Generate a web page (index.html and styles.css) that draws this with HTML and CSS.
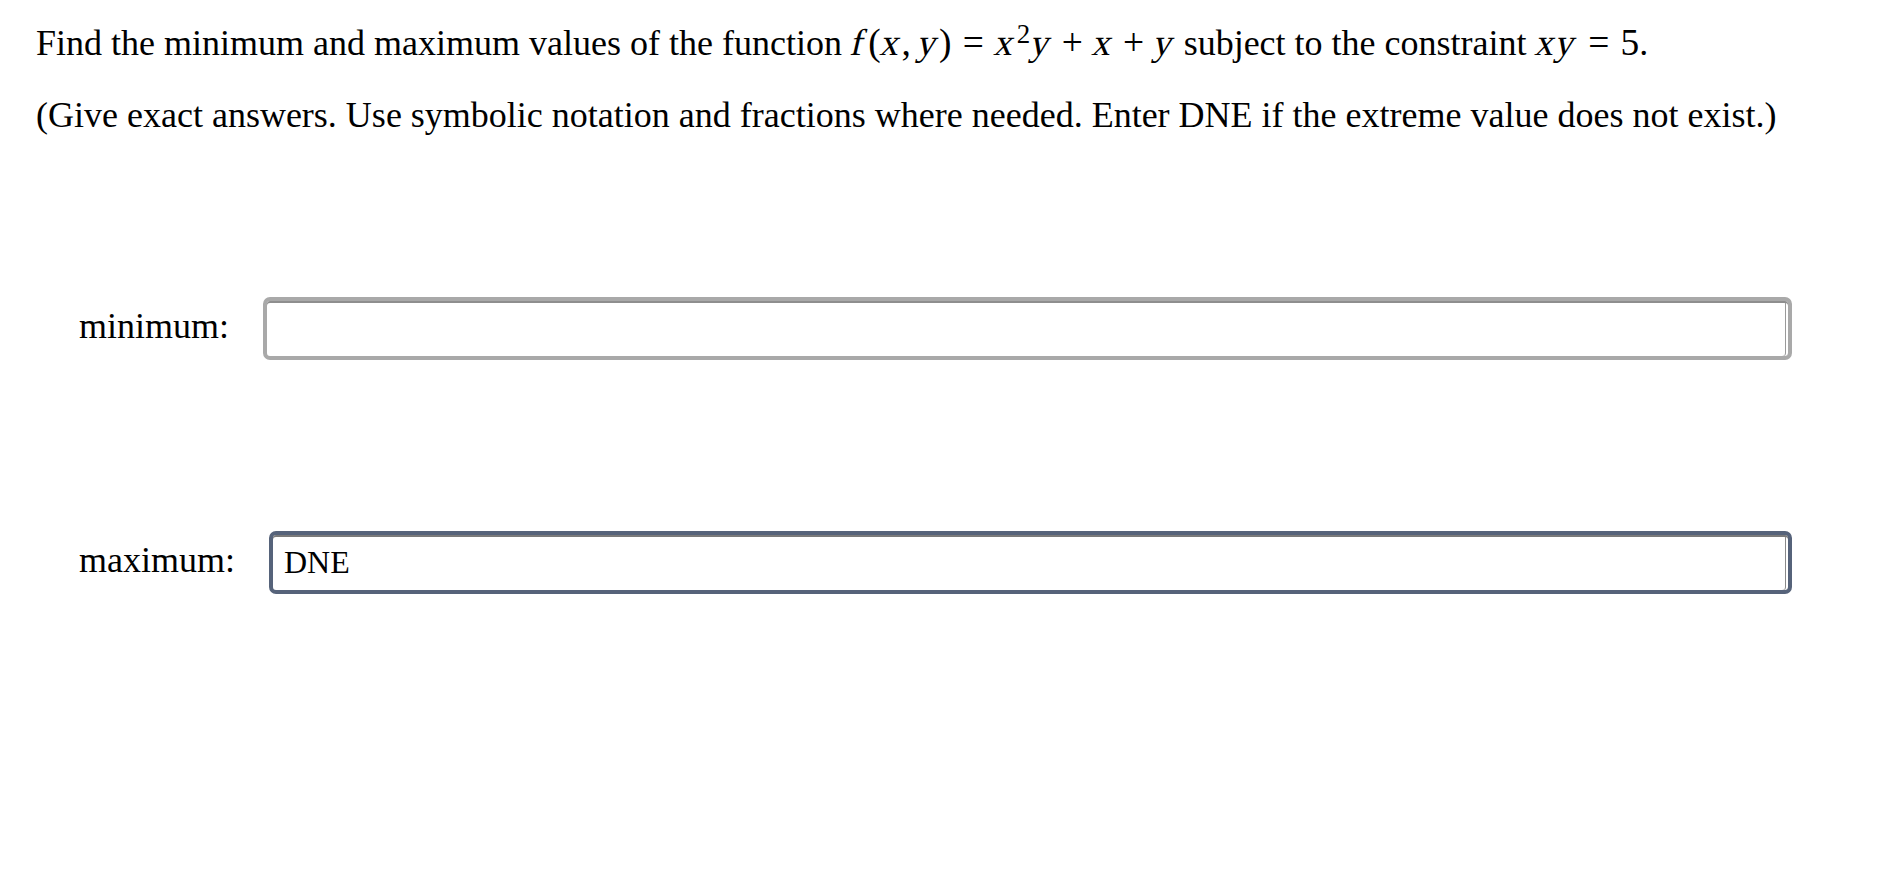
FILE: index.html
```html
<!DOCTYPE html>
<html>
<head>
<meta charset="utf-8">
<link rel="stylesheet" href="styles.css">
</head>
<body>
<div class="page">
  <div class="question">
    <p class="line">Find the minimum and maximum values of the function <span class="math"><span class="v vf">f</span><span class="p">(</span><span class="v">x</span><span class="comma">,</span><span class="v">y</span><span class="p">)</span><span class="rel">=</span><span class="v">x</span><sup>2</sup><span class="v">y</span><span class="bin">+</span><span class="v">x</span><span class="bin">+</span><span class="v">y</span></span> subject to the constraint <span class="math"><span class="v">x</span><span class="v">y</span><span class="rel">=</span>5</span>.</p>
    <p class="line">(Give exact answers. Use symbolic notation and fractions where needed. Enter DNE if the extreme value does not exist.)</p>
  </div>
  <div class="answers">
    <div class="row">
      <label class="lbl">minimum:</label>
      <input class="ans" type="text">
    </div>
    <div class="row">
      <label class="lbl">maximum:</label>
      <input class="ans dark" type="text" value="DNE">
    </div>
  </div>
</div>
</body>
</html>
```

FILE: styles.css
```css
html, body {
  margin: 0;
  padding: 0;
  background: #ffffff;
}

.page {
  font-family: "Liberation Serif", "Times New Roman", serif;
  color: #000;
  font-size: 36px;
  padding: 22px 89px 0 36px;
}

.question {
  display: flex;
  flex-direction: column;
  gap: 31px;
}

.line {
  margin: 0;
  line-height: 41px;
  white-space: nowrap;
}

.math {
  font-size: 1.04em;
}

.v {
  display: inline-block;
  font-style: normal;
  transform: skewX(-13deg);
  margin: 0 1px;
}

.vf {
  margin-right: 4px;
}

.p {
  display: inline-block;
}

.comma {
  margin-right: 0.2em;
}

.math sup {
  font-size: 0.72em;
  line-height: 0;
  vertical-align: 0.44em;
  margin: 0 1px 0 1px;
}

.rel {
  padding: 0 0.3em;
}

.bin {
  padding: 0 0.26em;
}

.answers {
  display: flex;
  flex-direction: column;
  gap: 171px;
  padding: 161px 0 0 43px;
}

.row {
  display: flex;
  align-items: center;
  gap: 34px;
}

.lbl {
  font-size: 36px;
  white-space: nowrap;
  margin-bottom: 6px;
}

.ans {
  flex: 1;
  box-sizing: border-box;
  height: 63px;
  margin: 0;
  border: 4px solid #a9a9a9;
  border-radius: 7px;
  box-shadow: inset 0 2px 0 #8e8e8e, inset -2px 0 0 #ffffff, inset -3px 0 0 #9a9a9a;
  padding: 0 11px;
  font-family: "Liberation Serif", "Times New Roman", serif;
  font-size: 32px;
  color: #000;
  background: #fff;
  outline: none;
}

.ans.dark {
  border-color: #56637a;
  box-shadow: inset 0 2px 0 #7a7a7a, inset -2px 0 0 #ffffff, inset -3px 0 0 #8a8a8a;
}
```
